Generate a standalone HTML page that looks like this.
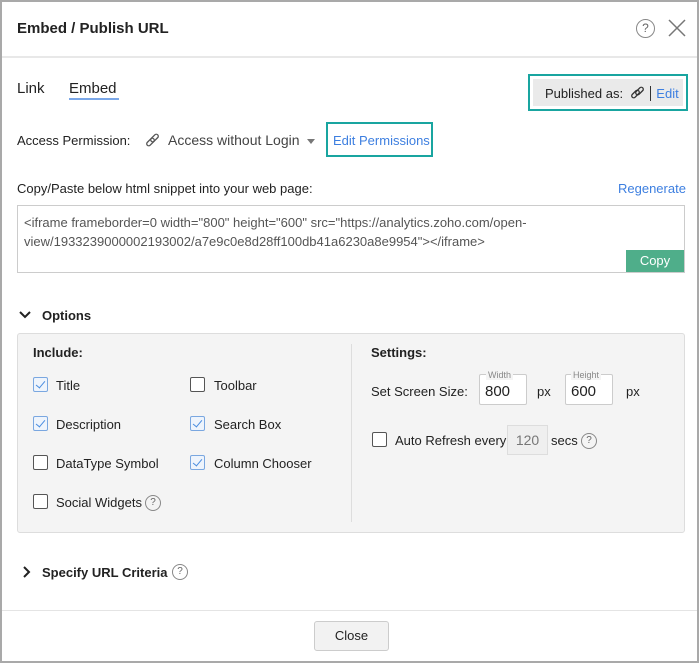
<!DOCTYPE html><html><head><style>
*{box-sizing:border-box;margin:0;padding:0}
body{width:699px;height:663px;background:#fff;font-family:"Liberation Sans",sans-serif;color:#222;font-size:13px;position:relative;overflow:hidden}
.frame{position:absolute;left:0;top:0;width:699px;height:663px;border:2px solid #a9a9a9;z-index:5;pointer-events:none}
.a{position:absolute;white-space:nowrap}
.cb{position:absolute;width:15px;height:15px;border:1.5px solid #555;border-radius:2px;background:#fff}
.cb.on{border-color:#7aa7e0;background:#eef4fc}
.cb.on:after{content:"";position:absolute;left:4px;top:1px;width:4px;height:8px;border:solid #4a8de0;border-width:0 1.5px 1.5px 0;transform:rotate(40deg)}
.q{position:absolute;width:16px;height:16px;border:1px solid #888;border-radius:50%;font-size:10px;text-align:center;line-height:14px;color:#666}
.inp{position:absolute;border:1px solid #ccc;background:#fff;border-radius:2px;font-size:15px;padding:8px 0 0 5px}
</style></head><body>
<div class="frame"></div>
<div class="a" style="left:17px;top:19px;font-size:15px;font-weight:bold;top:20px">Embed / Publish URL</div>
<div class="q" style="left:636px;top:19px;width:19px;height:19px;line-height:17px;font-size:12px">?</div>
<svg class="a" style="left:668px;top:19px" width="18" height="18"><path d="M1 1L17 17M17 1L1 17" stroke="#777" stroke-width="1.5"/></svg>
<div class="a" style="left:2px;top:56px;width:695px;height:2px;background:#e8e8e8"></div>
<div class="a" style="left:17px;top:80px;font-size:15px">Link</div>
<div class="a" style="left:69px;top:80px;font-size:15px">Embed</div>
<div class="a" style="left:69px;top:98px;width:50px;height:2px;background:#7aa7e8"></div>
<div class="a" style="left:528px;top:74px;width:160px;height:37px;border:2px solid #19a5a0;padding:3px"><div style="background:#eaeaea;height:100%;padding:7px 0 0 12px;font-size:13px">Published as: <svg width="16" height="14" style="vertical-align:-2px;margin:0 2px"><g fill="none" stroke="#333" stroke-width="1.3"><rect x="2" y="6" width="9" height="4" rx="2" transform="rotate(-45 6.5 8)"/><rect x="6" y="3" width="9" height="4" rx="2" transform="rotate(-45 10.5 5)"/></g></svg> <span style="border-left:1px solid #333;padding-left:5px;color:#3d7fe0">Edit</span></div></div>
<div class="a" style="left:17px;top:133px">Access Permission:</div>
<svg class="a" style="left:144px;top:132px" width="16" height="16"><g fill="none" stroke="#555" stroke-width="1.3"><rect x="2" y="8" width="9" height="4" rx="2" transform="rotate(-45 6.5 10)"/><rect x="6" y="4" width="9" height="4" rx="2" transform="rotate(-45 10.5 6)"/></g></svg>
<div class="a" style="left:168px;top:132px;font-size:14px;color:#444">Access without Login</div>
<div class="a" style="left:307px;top:139px;border:4px solid transparent;border-top:5px solid #777"></div>
<div class="a" style="left:326px;top:122px;width:107px;height:35px;border:2px solid #19a5a0;padding:9px 0 0 5px;color:#3d7fe0">Edit Permissions</div>
<div class="a" style="left:17px;top:181px">Copy/Paste below html snippet into your web page:</div>
<div class="a" style="left:618px;top:181px;color:#3d7fe0">Regenerate</div>
<div class="a" style="left:17px;top:205px;width:668px;height:68px;border:1px solid #ccc;padding:7px 6px;color:#555;font-size:13px;line-height:19px;white-space:normal">&lt;iframe frameborder=0 width="800" height="600" src="https://analytics.zoho.com/open-view/1933239000002193002/a7e9c0e8d28ff100db41a6230a8e9954"&gt;&lt;/iframe&gt;</div>
<div class="a" style="left:626px;top:250px;width:58px;height:22px;background:#4fae8a;color:#fff;text-align:center;line-height:22px">Copy</div>
<svg class="a" style="left:19px;top:310px" width="12" height="10"><path d="M1 2L6 7L11 2" stroke="#222" stroke-width="2" fill="none"/></svg>
<div class="a" style="left:42px;top:308px;font-weight:bold">Options</div>
<div class="a" style="left:17px;top:333px;width:668px;height:200px;background:#f4f4f4;border:1px solid #ddd;border-radius:3px"></div>
<div class="a" style="left:351px;top:344px;width:1px;height:178px;background:#ddd"></div>
<div class="a" style="left:33px;top:345px;font-weight:bold">Include:</div>
<div class="cb on" style="left:33px;top:377px"></div><div class="a" style="left:56px;top:378px">Title</div>
<div class="cb" style="left:190px;top:377px"></div><div class="a" style="left:214px;top:378px">Toolbar</div>
<div class="cb on" style="left:33px;top:416px"></div><div class="a" style="left:56px;top:417px">Description</div>
<div class="cb on" style="left:190px;top:416px"></div><div class="a" style="left:214px;top:417px">Search Box</div>
<div class="cb" style="left:33px;top:455px"></div><div class="a" style="left:56px;top:456px">DataType Symbol</div>
<div class="cb on" style="left:190px;top:455px"></div><div class="a" style="left:214px;top:456px">Column Chooser</div>
<div class="cb" style="left:33px;top:494px"></div><div class="a" style="left:56px;top:495px">Social Widgets</div>
<div class="q" style="left:145px;top:495px">?</div>
<div class="a" style="left:371px;top:345px;font-weight:bold">Settings:</div>
<div class="a" style="left:371px;top:384px">Set Screen Size:</div>
<div class="inp" style="left:479px;top:374px;width:48px;height:31px">800</div>
<div class="a" style="left:486px;top:370px;font-size:9px;color:#888;background:#f4f4f4;padding:0 2px">Width</div>
<div class="a" style="left:537px;top:384px">px</div>
<div class="inp" style="left:565px;top:374px;width:48px;height:31px">600</div>
<div class="a" style="left:571px;top:370px;font-size:9px;color:#888;background:#f4f4f4;padding:0 2px">Height</div>
<div class="a" style="left:626px;top:384px">px</div>
<div class="cb" style="left:372px;top:432px"></div>
<div class="a" style="left:395px;top:433px">Auto Refresh every</div>
<div class="a" style="left:507px;top:425px;width:41px;height:30px;border:1px solid #ddd;background:#efefef;color:#777;font-size:14px;text-align:center;line-height:28px">120</div>
<div class="a" style="left:551px;top:433px">secs</div>
<div class="q" style="left:581px;top:433px">?</div>
<svg class="a" style="left:22px;top:566px" width="10" height="12"><path d="M2 1L7 6L2 11" stroke="#222" stroke-width="2" fill="none"/></svg>
<div class="a" style="left:42px;top:565px;font-weight:bold">Specify URL Criteria</div>
<div class="q" style="left:169px;top:564px;left:172px">?</div>
<div class="a" style="left:2px;top:610px;width:695px;height:1px;background:#e4e4e4"></div>
<div class="a" style="left:314px;top:621px;width:75px;height:30px;border:1px solid #ccc;border-radius:3px;background:#f2f2f2;text-align:center;line-height:28px">Close</div>
</body></html>
